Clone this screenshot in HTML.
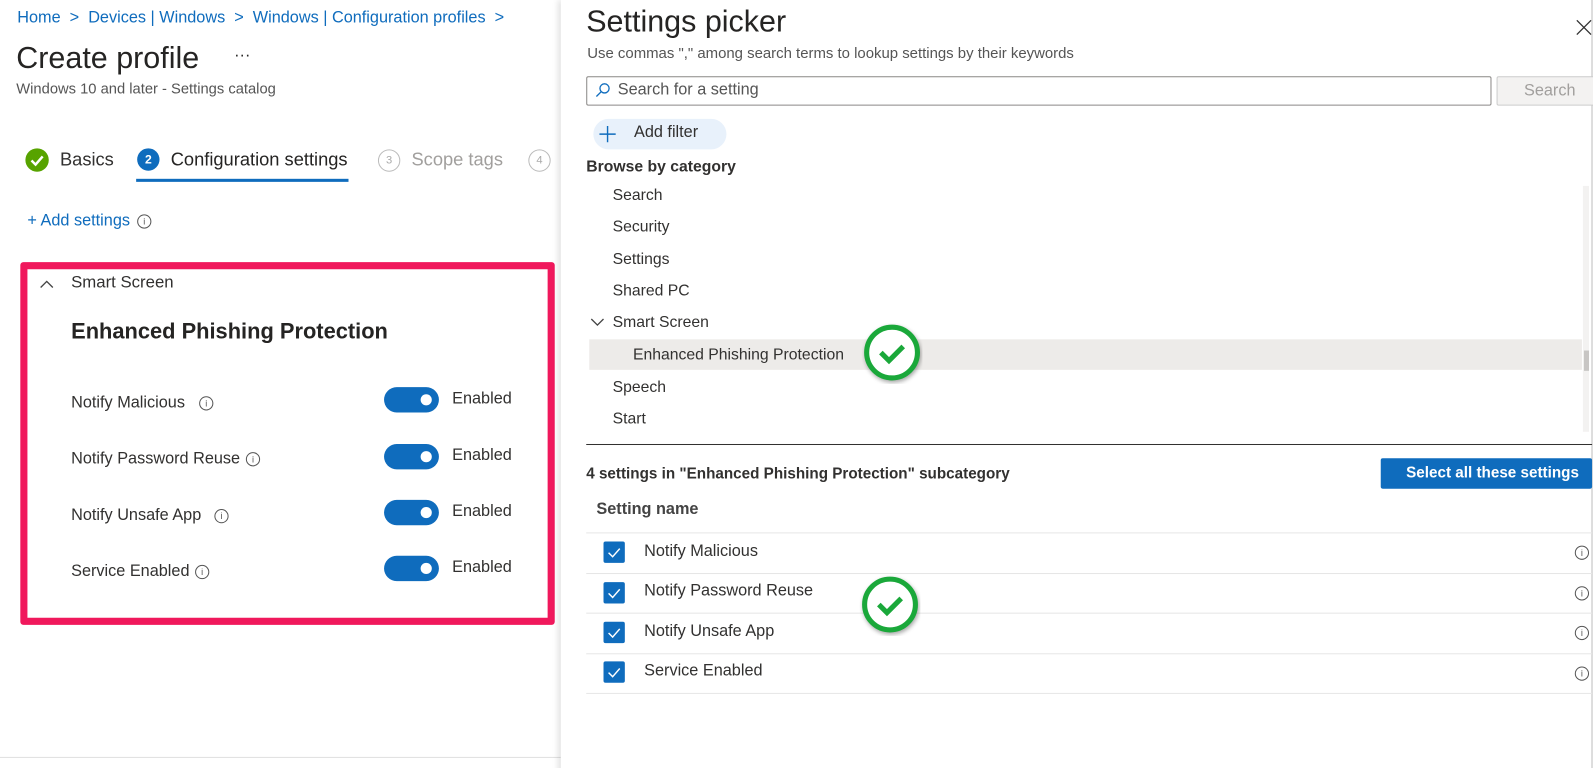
<!DOCTYPE html>
<html><head><style>
*{margin:0;padding:0;box-sizing:border-box}
body{width:1593px;height:768px;overflow:hidden;background:#fff;font-family:"Liberation Sans",sans-serif;color:#323130;position:relative}
#w{position:absolute;left:0;top:0;width:1568px;height:756px;transform:scale(1.016);transform-origin:0 0;overflow:hidden}
.a{position:absolute;white-space:nowrap}
.blue{color:#0f6cbd}
.tog{position:absolute;width:54px;height:25px;border-radius:13px;background:#0f6cbd}
.tog::after{content:"";position:absolute;right:7px;top:7px;width:11px;height:11px;border-radius:50%;background:#fff}
.info{position:absolute;width:14px;height:14px;border:1px solid #555;border-radius:50%;font-size:9px;text-align:center;line-height:12px;color:#555}
.cb{position:absolute;left:594px;width:21px;height:21px;background:#0f6cbd;border-radius:2px}
.row{position:absolute;left:577px;width:990px;height:1px;background:#e6e6e6}
.cat{position:absolute;left:603px;font-size:15.5px}
</style></head><body><div id="w">
<div class="a blue" style="left:17px;top:9px;font-size:16px">Home &nbsp;&gt;&nbsp; Devices | Windows &nbsp;&gt;&nbsp; Windows | Configuration profiles &nbsp;&gt;</div>
<div class="a" style="left:16px;top:41px;font-size:30px;color:#252423">Create profile <span style="font-size:16px;margin-left:26px;vertical-align:8px">···</span></div>
<div class="a" style="left:16px;top:80px;font-size:14.5px;color:#555">Windows 10 and later - Settings catalog</div>
<div class="a" style="left:25px;top:146px;width:23px;height:23px;border-radius:50%;background:#57a300"><svg width="23" height="23"><path d="M6 12l4 4 7-8" stroke="#fff" stroke-width="2.4" fill="none"/></svg></div>
<div class="a" style="left:59px;top:147px;font-size:18px">Basics</div>
<div class="a" style="left:135px;top:146px;width:22px;height:22px;border-radius:50%;background:#0f6cbd;color:#fff;font-size:12px;text-align:center;line-height:22px;font-weight:bold">2</div>
<div class="a" style="left:168px;top:147px;font-size:18px;color:#252423">Configuration settings</div>
<div class="a" style="left:134px;top:176px;width:209px;height:3px;background:#0f6cbd"></div>
<div class="a" style="left:372px;top:147px;width:22px;height:22px;border-radius:50%;border:1px solid #bbb;color:#aaa;font-size:11px;text-align:center;line-height:20px">3</div>
<div class="a" style="left:405px;top:147px;font-size:18px;color:#a19f9d">Scope tags</div>
<div class="a" style="left:520px;top:147px;width:22px;height:22px;border-radius:50%;border:1px solid #bbb;color:#aaa;font-size:11px;text-align:center;line-height:20px">4</div>
<div class="a blue" style="left:27px;top:209px;font-size:16px">+ Add settings</div>
<div class="info" style="left:135px;top:211px">i</div>
<div class="a" style="left:20px;top:258px;width:526px;height:357px;border:7px solid #f0185c;border-radius:3px"></div>
<svg class="a" style="left:38px;top:274px" width="16" height="12"><path d="M2 9l6-6 6 6" stroke="#444" stroke-width="1.3" fill="none"/></svg>
<div class="a" style="left:70px;top:269px;font-size:16.5px">Smart Screen</div>
<div class="a" style="left:70px;top:314px;font-size:21.5px;font-weight:bold;color:#252423">Enhanced Phishing Protection</div>
<div class="a" style="left:70px;top:388px;font-size:16px">Notify Malicious</div><div class="info" style="left:196px;top:390px">i</div>
<div class="a" style="left:70px;top:443px;font-size:16px">Notify Password Reuse</div><div class="info" style="left:242px;top:445px">i</div>
<div class="a" style="left:70px;top:499px;font-size:16px">Notify Unsafe App</div><div class="info" style="left:211px;top:501px">i</div>
<div class="a" style="left:70px;top:554px;font-size:16px">Service Enabled</div><div class="info" style="left:192px;top:556px">i</div>
<div class="tog" style="left:378px;top:381px"></div><div class="a" style="left:445px;top:384px;font-size:16px">Enabled</div>
<div class="tog" style="left:378px;top:437px"></div><div class="a" style="left:445px;top:440px;font-size:16px">Enabled</div>
<div class="tog" style="left:378px;top:492px"></div><div class="a" style="left:445px;top:495px;font-size:16px">Enabled</div>
<div class="tog" style="left:378px;top:547px"></div><div class="a" style="left:445px;top:550px;font-size:16px">Enabled</div>
<div class="a" style="left:0;top:745px;width:552px;height:1px;background:#e0e0e0"></div>
<div class="a" style="left:552px;top:0;width:1041px;height:768px;background:#fff;box-shadow:-3px 0 6px rgba(0,0,0,.12)"></div>
<div class="a" style="left:1566px;top:0;width:2px;height:768px;background:#ddd"></div>
<div class="a" style="left:577px;top:5px;font-size:30px;color:#252423">Settings picker</div>
<div class="a" style="left:578px;top:45px;font-size:14.7px;color:#555">Use commas "," among search terms to lookup settings by their keywords</div>
<svg class="a" style="left:1550px;top:18px" width="18" height="18"><path d="M2 2l14 14M16 2L2 16" stroke="#333" stroke-width="1.3"/></svg>
<div class="a" style="left:577px;top:75px;width:891px;height:29px;border:1px solid #8a8886;border-radius:2px"></div>
<svg class="a" style="left:585px;top:81px" width="16" height="16"><circle cx="10" cy="6" r="4.5" stroke="#0f6cbd" stroke-width="1.3" fill="none"/><path d="M7 9l-5 5" stroke="#0f6cbd" stroke-width="1.3"/></svg>
<div class="a" style="left:608px;top:80px;font-size:16px;color:#555">Search for a setting</div>
<div class="a" style="left:1473px;top:75px;width:120px;height:29px;border:1px solid #ccc;background:#f3f2f1;border-radius:2px;color:#a19f9d;font-size:16px;padding:5px 0 0 26px">Search</div>
<div class="a" style="left:584px;top:117px;width:131px;height:30px;border-radius:15px;background:#e8f1fb"></div>
<svg class="a" style="left:589px;top:123px" width="18" height="18"><path d="M9 1v16M1 9h16" stroke="#0f6cbd" stroke-width="1.4"/></svg>
<div class="a" style="left:624px;top:122px;font-size:16px">Add filter</div>
<div class="a" style="left:577px;top:156px;font-size:15.5px;font-weight:bold;color:#323130">Browse by category</div>
<div class="cat a" style="top:184px">Search</div>
<div class="cat a" style="top:215px">Security</div>
<div class="cat a" style="top:247px">Settings</div>
<div class="cat a" style="top:278px">Shared PC</div>
<svg class="a" style="left:580px;top:311px" width="16" height="12"><path d="M2 3l6 6 6-6" stroke="#444" stroke-width="1.3" fill="none"/></svg>
<div class="cat a" style="top:309px">Smart Screen</div>
<div class="a" style="left:580px;top:334px;width:977px;height:30px;background:#edebe9"></div>
<div class="a" style="left:623px;top:341px;font-size:15.5px">Enhanced Phishing Protection</div>
<div class="cat a" style="top:373px">Speech</div>
<div class="cat a" style="top:404px">Start</div>
<div class="a" style="left:1558px;top:183px;width:6px;height:242px;background:#f3f2f1"></div>
<div class="a" style="left:1559px;top:345px;width:5px;height:20px;background:#c8c6c4"></div>
<div class="a" style="left:577px;top:437px;width:990px;height:1px;background:#323130"></div>
<div class="a" style="left:577px;top:458px;font-size:15px;font-weight:bold">4 settings in "Enhanced Phishing Protection" subcategory</div>
<div class="a" style="left:1359px;top:451px;width:208px;height:30px;background:#0f6cbd;border-radius:2px;color:#fff;font-weight:bold;font-size:15px;padding:6px 0 0 25px">Select all these settings</div>
<div class="a" style="left:587px;top:493px;font-size:16px;font-weight:bold;color:#444">Setting name</div>
<div class="row" style="top:524px"></div><div class="row" style="top:564px"></div><div class="row" style="top:603px"></div><div class="row" style="top:643px"></div><div class="row" style="top:682px"></div>
<div class="cb" style="top:533px;left:594px"><svg width="21" height="21"><path d="M5 11l4 4 7-8" stroke="#fff" stroke-width="1.4" fill="none"/></svg></div>
<div class="cb" style="top:573px;left:594px"><svg width="21" height="21"><path d="M5 11l4 4 7-8" stroke="#fff" stroke-width="1.4" fill="none"/></svg></div>
<div class="cb" style="top:612px;left:594px"><svg width="21" height="21"><path d="M5 11l4 4 7-8" stroke="#fff" stroke-width="1.4" fill="none"/></svg></div>
<div class="cb" style="top:651px;left:594px"><svg width="21" height="21"><path d="M5 11l4 4 7-8" stroke="#fff" stroke-width="1.4" fill="none"/></svg></div>
<div class="a" style="left:634px;top:534px;font-size:16px">Notify Malicious</div>
<div class="a" style="left:634px;top:573px;font-size:16px">Notify Password Reuse</div>
<div class="a" style="left:634px;top:613px;font-size:16px">Notify Unsafe App</div>
<div class="a" style="left:634px;top:652px;font-size:16px">Service Enabled</div>
<div class="info" style="left:1550px;top:537px">i</div><div class="info" style="left:1550px;top:577px">i</div><div class="info" style="left:1550px;top:616px">i</div><div class="info" style="left:1550px;top:656px">i</div>
<svg class="a" style="left:848px;top:318px" width="60" height="60"><circle cx="30" cy="29" r="25" fill="#fff" stroke="#1aa83a" stroke-width="5" style="filter:drop-shadow(1px 2px 2px rgba(0,0,0,.35))"/><path d="M19 29l8 8 14-14" stroke="#1aa83a" stroke-width="5" fill="none"/></svg>
<svg class="a" style="left:846px;top:566px" width="60" height="60"><circle cx="30" cy="29" r="25" fill="#fff" stroke="#1aa83a" stroke-width="5" style="filter:drop-shadow(1px 2px 2px rgba(0,0,0,.35))"/><path d="M19 29l8 8 14-14" stroke="#1aa83a" stroke-width="5" fill="none"/></svg>
</div></body></html>
